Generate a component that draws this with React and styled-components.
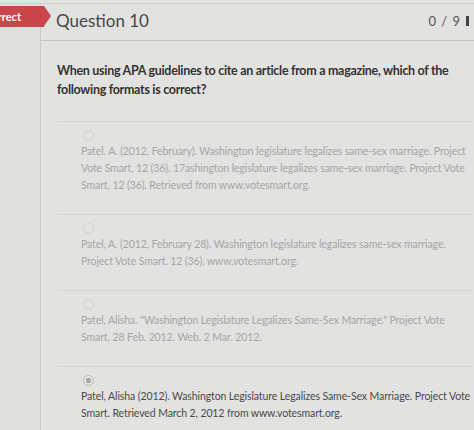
import React from 'react';
import styled, { createGlobalStyle } from 'styled-components';

const GlobalStyle = createGlobalStyle`
  html, body {
    margin: 0;
    padding: 0;
    background: #e2e2e0;
    overflow: hidden;
  }
  body {
    font-family: Lato, "Open Sans", sans-serif;
  }
`;

const Page = styled.div`
  position: relative;
  display: flex;
  width: 474px;
  height: 430px;
  overflow: hidden;
  background: #e2e2e0;
`;

const LeftRail = styled.div`
  width: 40px;
  flex-shrink: 0;
  margin-top: 3px;
  border-top: 1px solid #cfcfcd;
  border-right: 1px solid #c9c9c7;
  background: #dfdfdd;
`;

const Main = styled.div`
  flex: 1;
  display: flex;
  flex-direction: column;
`;

const Header = styled.div`
  display: flex;
  align-items: flex-end;
  justify-content: space-between;
  box-sizing: border-box;
  height: 38px;
  min-height: 38px;
  margin-top: 3px;
  border-top: 1px solid #cfcfcd;
  border-bottom: 1px solid #c4c4c2;
  padding: 0 10px 8px 15px;
`;

const Title = styled.h2`
  margin: 0;
  font-size: 17px;
  line-height: 22px;
  font-weight: 400;
  color: #484848;
`;

const Points = styled.div`
  display: flex;
  align-items: center;
  gap: 5px;
  margin-bottom: 3px;
  font-size: 13px;
  color: #555;
  letter-spacing: 1px;
`;

const PointsMark = styled.span`
  width: 3px;
  height: 10px;
  background: #444;
`;

const Banner = styled.div`
  position: absolute;
  left: -27px;
  top: 6px;
  height: 21px;
  width: 71px;
  display: flex;
  align-items: center;
  justify-content: flex-end;
  padding-right: 23px;
  box-sizing: border-box;
  background: #c9474c;
  color: #fff;
  font-size: 11px;
  font-weight: 700;
  &::after {
    content: '';
    position: absolute;
    right: -7px;
    top: 0;
    border-top: 10.5px solid transparent;
    border-bottom: 10.5px solid transparent;
    border-left: 7px solid #c9474c;
  }
`;

const Body = styled.div`
  padding: 20px 6px 0 16px;
`;

const QuestionText = styled.p`
  margin: 0 0 22px;
  width: 410px;
  font-size: 12.5px;
  font-weight: 700;
  letter-spacing: -0.3px;
  line-height: 19px;
  color: #333;
`;

const Option = styled.div`
  display: flex;
  flex-direction: column;
  gap: 2px;
  padding: 8px 0 20px 24px;
  border-top: 1px solid #d6d6d4;
`;

const Radio = styled.span`
  width: 9px;
  height: 9px;
  margin-left: 2px;
  border-radius: 50%;
  border: 1px solid ${p => (p.checked ? '#b8b8b6' : '#d2d2d0')};
  background: ${p => (p.checked ? 'radial-gradient(circle, #a9a9a7 0 2.5px, #e6e6e4 3px)' : 'transparent')};
`;

const OptionText = styled.div`
  width: 392px;
  font-size: 10.5px;
  letter-spacing: -0.1px;
  line-height: 17px;
  color: ${p => (p.selected ? '#4a4a4a' : '#a7a7a5')};
`;

const options = [
  'Patel. A. (2012, February). Washington legislature legalizes same-sex marriage. Project Vote Smart, 12 (36). 17ashington legislature legalizes same-sex marriage. Project Vote Smart, 12 (36). Retrieved from www.votesmart.org.',
  'Patel, A. (2012, February 28). Washington legislature legalizes same-sex marriage. Project Vote Smart. 12 (36). www.votesmart.org.',
  'Patel, Alisha. "Washington Legislature Legalizes Same-Sex Marriage." Project Vote Smart. 28 Feb. 2012. Web. 2 Mar. 2012.',
  'Patel, Alisha (2012). Washington Legislature Legalizes Same-Sex Marriage. Project Vote Smart. Retrieved March 2, 2012 from www.votesmart.org.',
];

export default function App() {
  return (
    <Page>
      <GlobalStyle />
      <Banner>Incorrect</Banner>
      <LeftRail />
      <Main>
        <Header>
          <Title>Question 10</Title>
          <Points>
            0 / 9
            <PointsMark />
          </Points>
        </Header>
        <Body>
          <QuestionText>
            When using APA guidelines to cite an article from a magazine, which of the following formats is correct?
          </QuestionText>
          {options.map((text, i) => (
            <Option key={i}>
              <Radio checked={i === 3} />
              <OptionText selected={i === 3}>{text}</OptionText>
            </Option>
          ))}
        </Body>
      </Main>
    </Page>
  );
}
